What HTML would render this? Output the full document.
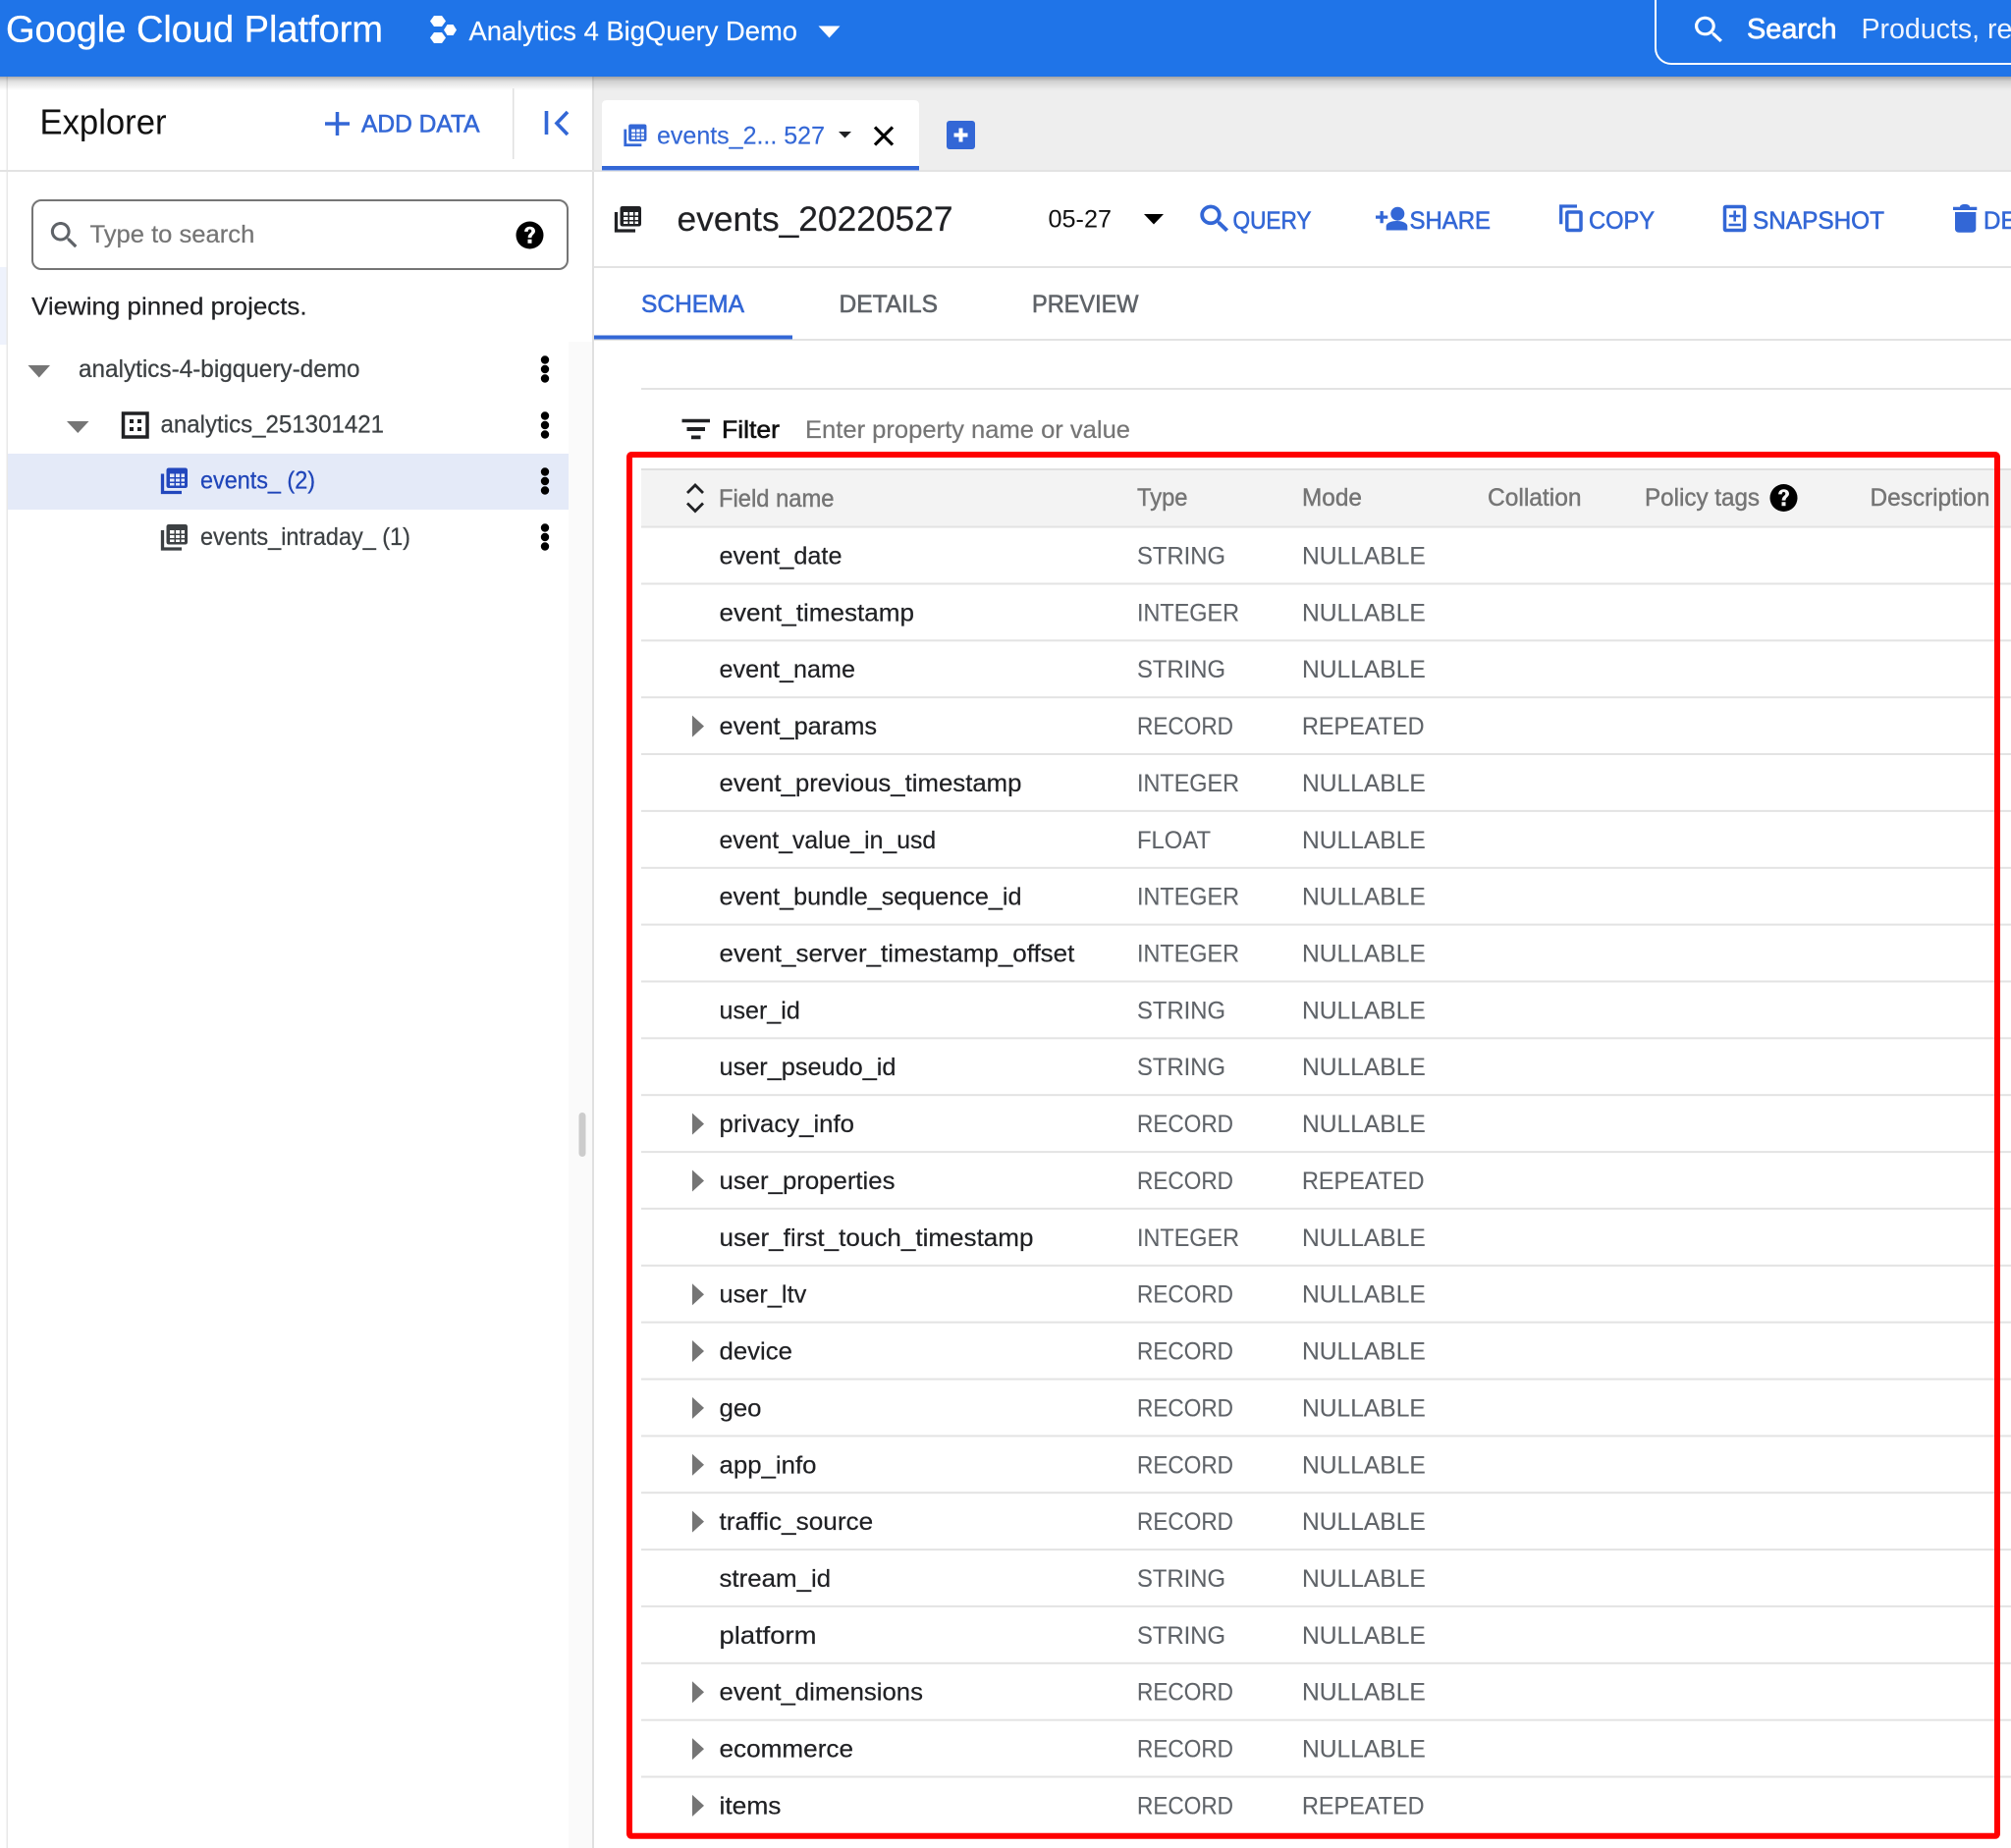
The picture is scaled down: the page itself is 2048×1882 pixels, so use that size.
<!DOCTYPE html>
<html lang="en"><head><meta charset="utf-8"><title>BigQuery Schema</title>
<style>
html,body{margin:0;padding:0;background:#fff;width:2048px;height:1882px;overflow:hidden}
svg{display:block}
text{font-family:"Liberation Sans",Arial,sans-serif;font-size:25px;white-space:pre}
.f{fill:#202124;stroke:#202124;stroke-width:.2px}
.g{fill:#5f6368;stroke:#5f6368;stroke-width:.1px}
.h{fill:#757575;stroke:#757575;stroke-width:.2px}
.hh{fill:#757575;stroke:#757575;stroke-width:.45px}
.b{fill:#3367d6;stroke:#3367d6;stroke-width:.15px}
.bm{fill:#3367d6;stroke:#3367d6;stroke-width:.6px}
.gm{fill:#5f6368;stroke:#5f6368;stroke-width:.6px}
.t{fill:#3c4043;stroke:#3c4043;stroke-width:.25px}
.w{fill:#fff;stroke:#fff;stroke-width:.2px}
</style></head><body>
<svg width="2048" height="1882" viewBox="0 0 2048 1882" xmlns="http://www.w3.org/2000/svg">
<defs>
<linearGradient id="sh" x1="0" y1="0" x2="0" y2="1"><stop offset="0" stop-color="#000" stop-opacity=".32"/><stop offset=".35" stop-color="#000" stop-opacity=".12"/><stop offset="1" stop-color="#000" stop-opacity="0"/></linearGradient>
<path id="t" d="M705-11 717 0 705 11z" fill="#757575"/>
<path id="sr" d="M15.5 14h-.79l-.28-.27C15.41 12.59 16 11.11 16 9.5 16 5.91 13.09 3 9.5 3S3 5.91 3 9.5 5.91 16 9.5 16c1.61 0 3.09-.59 4.23-1.57l.27.28v.79l5 4.99L20.49 19l-4.99-5zm-6 0C7.01 14 5 11.99 5 9.5S7.01 5 9.5 5 14 7.01 14 9.5 11.99 14 9.5 14z"/>
<g id="d"><circle cx="0" cy="-9.5" r="4.2"/><circle cx="0" cy="0" r="4.2"/><circle cx="0" cy="9.5" r="4.2"/></g>
<path id="q" fill-rule="evenodd" d="M0-14a14 14 0 1 0 0 28A14 14 0 1 0 0-14zM-5.4-3.6C-5.3-7-3-8.8.1-8.8 3.300-8.800 5.500-6.900 5.500-4.100 5.500-1.200 2-.5 1.900 2.600H-1.800C-1.900-1.700 1.800-2 1.800-4.200 1.800-5.300 1.100-6 0-6-1.100-6-1.800-5.100-1.800-3.600zM-2 4.300H2V8.200H-2z"/>
<g id="tb"><path d="M1.500 6V25H21" fill="none" stroke="currentColor" stroke-width="3.300"/><path fill-rule="evenodd" fill="currentColor" d="M5.500 2.500Q5.500 0 8 0H24.500Q27 0 27 2.500V18Q27 20.500 24.500 20.500H8Q5.500 20.500 5.500 18zM9 6V9.500H13.500V6zM15 6V9.500H19V6zM20.500 6V9.500H24V6zM9 11V14H13.500V11zM15 11V14H19V11zM20.500 11V14H24V11zM9 15.500V18H13.500V15.500zM15 15.500V18H19V15.500zM20.500 15.500V18H24V15.500z"/></g>
</defs>

<!-- backgrounds -->
<rect width="2048" height="1882" fill="#fff"/>
<rect x="605" y="78" width="1443" height="96" fill="#eeeeee"/>
<rect x="579" y="348" width="24" height="1534" fill="#fafafa"/>
<rect x="0" y="272" width="7" height="79" fill="#eef2fc"/>
<rect x="6.500" y="78" width="1.500" height="1804" fill="#e8e8e8"/>
<rect x="603" y="78" width="2" height="1804" fill="#e0e0e0"/>
<rect x="0" y="173" width="2048" height="2" fill="#e3e3e3"/>
<rect x="605" y="271" width="1443" height="2" fill="#e3e3e3"/>
<rect x="605" y="345" width="1443" height="2" fill="#e3e3e3"/>
<rect x="653" y="395" width="1395" height="2" fill="#e3e3e3"/>
<rect x="589.500" y="1133" width="7" height="45" rx="3.500" fill="#cccccc"/>

<!-- header -->
<rect x="0" y="78" width="2048" height="14" fill="url(#sh)"/>
<rect width="2048" height="78" fill="#1f74e8"/>
<text x="6" y="42.500" fill="#fff" stroke="#fff" stroke-width=".3" style="font-size:38px" textLength="384" lengthAdjust="spacingAndGlyphs">Google Cloud Platform</text>
<g fill="#fff">
<path d="M438 21.500 442 16H450L454 21.500 450 27H442z"/>
<path d="M452 30.500 455.500 25H461.500L465 30.500 461.500 36H455.500z"/>
<path d="M438 38.500 442 33H450L454 38.500 450 44H442z"/>
<path d="M833.500 26.500H855.500L844.500 38.500z"/>
</g>
<text x="477.500" y="41" class="w" style="font-size:28px" textLength="334.500" lengthAdjust="spacingAndGlyphs">Analytics 4 BigQuery Demo</text>
<rect x="1686" y="-20" width="420" height="85" rx="16" fill="none" stroke="#fff" stroke-width="2"/>
<use href="#sr" transform="translate(1721.200 12.300) scale(1.600 1.500)" fill="#fff"/>
<text x="1779" y="39" fill="#fff" stroke="#fff" stroke-width=".7" style="font-size:29px" textLength="91.500" lengthAdjust="spacingAndGlyphs">Search</text>
<text x="1895.500" y="39" fill="#f0f5fe" style="font-size:29px" textLength="330" lengthAdjust="spacingAndGlyphs">Products, resources, docs</text>

<!-- explorer -->
<text x="40.500" y="136.500" style="font-size:36px;fill:#111" textLength="129" lengthAdjust="spacingAndGlyphs">Explorer</text>
<path d="M331 126H356M343.500 114V138" stroke="#3367d6" stroke-width="3.500" fill="none"/>
<text x="368" y="134.500" class="bm" textLength="120.500" lengthAdjust="spacingAndGlyphs">ADD DATA</text>
<rect x="522" y="90" width="1.500" height="72" fill="#e0e0e0"/>
<path d="M556.500 113V137M578 114 567 125.500 578 137" stroke="#3367d6" stroke-width="3.600" fill="none"/>
<rect x="33" y="204" width="545" height="70" rx="9" fill="#fff" stroke="#757575" stroke-width="2"/>
<use href="#sr" transform="translate(47.300 221.500) scale(1.520 1.500)" fill="#5f6368"/>
<text x="91.500" y="247" class="h" textLength="167.800" lengthAdjust="spacingAndGlyphs">Type to search</text>
<use href="#q" x="539.500" y="239.500"/>
<text x="32" y="320.500" class="f" textLength="280.600" lengthAdjust="spacingAndGlyphs">Viewing pinned projects.</text>

<!-- tree -->
<rect x="8" y="462" width="571" height="57" fill="#e4eaf8"/>
<path d="M28.500 372H51L39.800 384.500z" fill="#757575"/>
<text x="80" y="384" class="t" textLength="286.500" lengthAdjust="spacingAndGlyphs">analytics-4-bigquery-demo</text>
<use href="#d" x="555" y="376"/>
<path d="M68 429H90.500L79.300 441z" fill="#757575"/>
<rect x="125.500" y="421" width="24.500" height="24" fill="none" stroke="#202124" stroke-width="3.500"/>
<g fill="#202124"><rect x="132" y="427" width="4" height="4"/><rect x="140" y="427" width="4" height="4"/><rect x="132" y="435" width="4" height="4"/><rect x="140" y="435" width="4" height="4"/></g>
<text x="163.500" y="440.500" class="t" textLength="227.500" lengthAdjust="spacingAndGlyphs">analytics_251301421</text>
<use href="#d" x="555" y="433"/>
<use href="#tb" x="164" y="476.500" color="#2247bd"/>
<text x="204" y="497.500" fill="#1f45b9" stroke="#1f45b9" stroke-width=".25" textLength="117" lengthAdjust="spacingAndGlyphs">events_ (2)</text>
<use href="#d" x="555" y="490"/>
<use href="#tb" x="164" y="534" color="#3c4043"/>
<text x="204" y="555" class="t" textLength="214" lengthAdjust="spacingAndGlyphs">events_intraday_ (1)</text>
<use href="#d" x="555" y="547"/>

<!-- tab strip -->
<path d="M613 174V107Q613 102 618 102H931Q936 102 936 107V174z" fill="#fff"/>
<rect x="613" y="169" width="323" height="4.500" fill="#3367d6"/>
<use href="#tb" transform="translate(635.500 126.500) scale(.85)" color="#3367d6"/>
<text x="669" y="146.500" class="b" textLength="171" lengthAdjust="spacingAndGlyphs">events_2... 527</text>
<path d="M854 134H867L860.500 140.500z" fill="#202124"/>
<path d="M891 129.500 909 147.500M909 129.500 891 147.500" stroke="#000" stroke-width="3.200" fill="none"/>
<rect x="964" y="123" width="29" height="29" rx="3" fill="#3367d6"/>
<path d="M971.500 137.500H985.500M978.500 130.500V144.500" stroke="#fff" stroke-width="4" fill="none"/>

<!-- toolbar -->
<use href="#tb" x="626" y="210" color="#202124"/>
<text x="689.500" y="235" class="f" style="font-size:35px" textLength="281" lengthAdjust="spacingAndGlyphs">events_20220527</text>
<text x="1067.500" y="231.500" fill="#111" textLength="64.500" lengthAdjust="spacingAndGlyphs">05-27</text>
<path d="M1165 218H1185L1175 228.500z" fill="#000"/>
<use href="#sr" transform="translate(1217.800 204.300) scale(1.600 1.530)" fill="#3367d6" stroke="#3367d6" stroke-width=".4"/>
<text x="1255.500" y="233" class="bm" textLength="80" lengthAdjust="spacingAndGlyphs">QUERY</text>
<g fill="#3367d6">
<circle cx="1423.300" cy="217.700" r="7"/>
<path d="M1411.700 234.500V230.500C1411.700 226.500 1418 225 1422.500 225S1433.300 226.500 1433.300 230.500V234.500z"/>
<path d="M1401 219.500H1405.500V215H1408.800V219.500H1413.300V222.800H1408.800V227.200H1405.500V222.800H1401z"/>
</g>
<text x="1435.500" y="233" class="bm" textLength="82.500" lengthAdjust="spacingAndGlyphs">SHARE</text>
<path d="M1606 210H1589.700V228.300" stroke="#3367d6" stroke-width="3.300" fill="none"/>
<rect x="1595.800" y="216" width="14.200" height="18.500" rx="1" fill="none" stroke="#3367d6" stroke-width="3.500"/>
<text x="1618" y="233" class="bm" textLength="67" lengthAdjust="spacingAndGlyphs">COPY</text>
<rect x="1756.500" y="210.500" width="20" height="24" rx="1" fill="none" stroke="#3367d6" stroke-width="3.500"/>
<path d="M1761 220H1772.500M1766.700 214.500V225.500M1760.500 229H1773" stroke="#3367d6" stroke-width="2.600" fill="none"/>
<text x="1785" y="233" class="bm" textLength="134" lengthAdjust="spacingAndGlyphs">SNAPSHOT</text>
<path d="M1996 210.700C1996 209 1998 208 2001 208S2006 209 2006 210.700H2013.300V214H1989V210.700zM1991 216H2012.300V233C2012.300 235.500 2010.500 236.700 2008.500 236.700H1995C1992.800 236.700 1991 235.500 1991 233z" fill="#3367d6"/>
<text x="2020" y="233" class="bm" textLength="175" lengthAdjust="spacingAndGlyphs">DELETE TABLE</text>

<!-- subtabs -->
<rect x="605" y="341.500" width="202" height="4" fill="#3367d6"/>
<text x="653" y="318" class="bm" textLength="105" lengthAdjust="spacingAndGlyphs">SCHEMA</text>
<text x="854.500" y="318" class="gm" textLength="100.500" lengthAdjust="spacingAndGlyphs">DETAILS</text>
<text x="1051" y="318" class="gm" textLength="108.500" lengthAdjust="spacingAndGlyphs">PREVIEW</text>

<!-- filter -->
<path d="M694.500 426.700H723V430.200H694.500zM699.500 435H718V439H699.500zM704 443.500H713.500V447.300H704z" fill="#202124"/>
<text x="735" y="446" fill="#111" stroke="#111" stroke-width=".6" textLength="59" lengthAdjust="spacingAndGlyphs">Filter</text>
<text x="820" y="446" class="h" textLength="331" lengthAdjust="spacingAndGlyphs">Enter property name or value</text>

<!-- table head -->
<rect x="653" y="478" width="1395" height="58" fill="#f3f3f3"/>
<rect x="653" y="477" width="1395" height="2" fill="#e0e0e0"/>
<path d="M700 502 708 494 716 502M700 512.500 708 520.500 716 512.500" stroke="#202124" stroke-width="2.800" fill="none"/>
<text x="732" y="516" class="hh" textLength="117.500" lengthAdjust="spacingAndGlyphs">Field name</text>
<text x="1158" y="515" class="hh" textLength="51.500" lengthAdjust="spacingAndGlyphs">Type</text>
<text x="1326" y="515" class="hh" textLength="61" lengthAdjust="spacingAndGlyphs">Mode</text>
<text x="1515" y="515" class="hh" textLength="95.500" lengthAdjust="spacingAndGlyphs">Collation</text>
<text x="1675" y="515" class="hh" textLength="117" lengthAdjust="spacingAndGlyphs">Policy tags</text>
<use href="#q" x="1816.500" y="507"/>
<text x="1904.500" y="515" class="hh" textLength="121.900" lengthAdjust="spacingAndGlyphs">Description</text>

<!-- row separators -->
<g fill="#e3e3e3">
<rect x="653" y="535.600" width="1395" height="2"/><rect x="653" y="593.500" width="1395" height="2"/><rect x="653" y="651.300" width="1395" height="2"/><rect x="653" y="709.200" width="1395" height="2"/><rect x="653" y="767" width="1395" height="2"/><rect x="653" y="824.900" width="1395" height="2"/><rect x="653" y="882.800" width="1395" height="2"/><rect x="653" y="940.600" width="1395" height="2"/><rect x="653" y="998.500" width="1395" height="2"/><rect x="653" y="1056.300" width="1395" height="2"/><rect x="653" y="1114.200" width="1395" height="2"/><rect x="653" y="1172.100" width="1395" height="2"/><rect x="653" y="1229.900" width="1395" height="2"/><rect x="653" y="1287.800" width="1395" height="2"/><rect x="653" y="1345.600" width="1395" height="2"/><rect x="653" y="1403.500" width="1395" height="2"/><rect x="653" y="1461.400" width="1395" height="2"/><rect x="653" y="1519.200" width="1395" height="2"/><rect x="653" y="1577.100" width="1395" height="2"/><rect x="653" y="1634.900" width="1395" height="2"/><rect x="653" y="1692.800" width="1395" height="2"/><rect x="653" y="1750.700" width="1395" height="2"/><rect x="653" y="1808.500" width="1395" height="2"/>
</g>

<!-- expand arrows -->
<use href="#t" y="739.600"/><use href="#t" y="1144.600"/><use href="#t" y="1202.500"/><use href="#t" y="1318.200"/><use href="#t" y="1376"/><use href="#t" y="1433.900"/><use href="#t" y="1491.800"/><use href="#t" y="1549.600"/><use href="#t" y="1723.200"/><use href="#t" y="1781.100"/><use href="#t" y="1838.900"/>

<!-- rows -->
<text x="732.500" y="574.500" class="f" textLength="125" lengthAdjust="spacingAndGlyphs">event_date</text><text x="1158" y="574.500" class="g" textLength="90" lengthAdjust="spacingAndGlyphs">STRING</text><text x="1326" y="574.500" class="g" textLength="125.800" lengthAdjust="spacingAndGlyphs">NULLABLE</text>
<text x="732.500" y="632.400" class="f" textLength="198.500" lengthAdjust="spacingAndGlyphs">event_timestamp</text><text x="1158" y="632.400" class="g" textLength="104" lengthAdjust="spacingAndGlyphs">INTEGER</text><text x="1326" y="632.400" class="g" textLength="125.800" lengthAdjust="spacingAndGlyphs">NULLABLE</text>
<text x="732.500" y="690.200" class="f" textLength="138.500" lengthAdjust="spacingAndGlyphs">event_name</text><text x="1158" y="690.200" class="g" textLength="90" lengthAdjust="spacingAndGlyphs">STRING</text><text x="1326" y="690.200" class="g" textLength="125.800" lengthAdjust="spacingAndGlyphs">NULLABLE</text>
<text x="732.500" y="748.100" class="f" textLength="160.600" lengthAdjust="spacingAndGlyphs">event_params</text><text x="1158" y="748.100" class="g" textLength="98" lengthAdjust="spacingAndGlyphs">RECORD</text><text x="1326" y="748.100" class="g" textLength="124.500" lengthAdjust="spacingAndGlyphs">REPEATED</text>
<text x="732.500" y="805.900" class="f" textLength="308" lengthAdjust="spacingAndGlyphs">event_previous_timestamp</text><text x="1158" y="805.900" class="g" textLength="104" lengthAdjust="spacingAndGlyphs">INTEGER</text><text x="1326" y="805.900" class="g" textLength="125.800" lengthAdjust="spacingAndGlyphs">NULLABLE</text>
<text x="732.500" y="863.800" class="f" textLength="220.700" lengthAdjust="spacingAndGlyphs">event_value_in_usd</text><text x="1158" y="863.800" class="g" textLength="75" lengthAdjust="spacingAndGlyphs">FLOAT</text><text x="1326" y="863.800" class="g" textLength="125.800" lengthAdjust="spacingAndGlyphs">NULLABLE</text>
<text x="732.500" y="921.700" class="f" textLength="308" lengthAdjust="spacingAndGlyphs">event_bundle_sequence_id</text><text x="1158" y="921.700" class="g" textLength="104" lengthAdjust="spacingAndGlyphs">INTEGER</text><text x="1326" y="921.700" class="g" textLength="125.800" lengthAdjust="spacingAndGlyphs">NULLABLE</text>
<text x="732.500" y="979.500" class="f" textLength="361.800" lengthAdjust="spacingAndGlyphs">event_server_timestamp_offset</text><text x="1158" y="979.500" class="g" textLength="104" lengthAdjust="spacingAndGlyphs">INTEGER</text><text x="1326" y="979.500" class="g" textLength="125.800" lengthAdjust="spacingAndGlyphs">NULLABLE</text>
<text x="732.500" y="1037.400" class="f" textLength="82.300" lengthAdjust="spacingAndGlyphs">user_id</text><text x="1158" y="1037.400" class="g" textLength="90" lengthAdjust="spacingAndGlyphs">STRING</text><text x="1326" y="1037.400" class="g" textLength="125.800" lengthAdjust="spacingAndGlyphs">NULLABLE</text>
<text x="732.500" y="1095.200" class="f" textLength="180" lengthAdjust="spacingAndGlyphs">user_pseudo_id</text><text x="1158" y="1095.200" class="g" textLength="90" lengthAdjust="spacingAndGlyphs">STRING</text><text x="1326" y="1095.200" class="g" textLength="125.800" lengthAdjust="spacingAndGlyphs">NULLABLE</text>
<text x="732.500" y="1153.100" class="f" textLength="137.500" lengthAdjust="spacingAndGlyphs">privacy_info</text><text x="1158" y="1153.100" class="g" textLength="98" lengthAdjust="spacingAndGlyphs">RECORD</text><text x="1326" y="1153.100" class="g" textLength="125.800" lengthAdjust="spacingAndGlyphs">NULLABLE</text>
<text x="732.500" y="1211" class="f" textLength="179" lengthAdjust="spacingAndGlyphs">user_properties</text><text x="1158" y="1211" class="g" textLength="98" lengthAdjust="spacingAndGlyphs">RECORD</text><text x="1326" y="1211" class="g" textLength="124.500" lengthAdjust="spacingAndGlyphs">REPEATED</text>
<text x="732.500" y="1268.800" class="f" textLength="320" lengthAdjust="spacingAndGlyphs">user_first_touch_timestamp</text><text x="1158" y="1268.800" class="g" textLength="104" lengthAdjust="spacingAndGlyphs">INTEGER</text><text x="1326" y="1268.800" class="g" textLength="125.800" lengthAdjust="spacingAndGlyphs">NULLABLE</text>
<text x="732.500" y="1326.700" class="f" textLength="88.800" lengthAdjust="spacingAndGlyphs">user_ltv</text><text x="1158" y="1326.700" class="g" textLength="98" lengthAdjust="spacingAndGlyphs">RECORD</text><text x="1326" y="1326.700" class="g" textLength="125.800" lengthAdjust="spacingAndGlyphs">NULLABLE</text>
<text x="732.500" y="1384.500" class="f" textLength="74.400" lengthAdjust="spacingAndGlyphs">device</text><text x="1158" y="1384.500" class="g" textLength="98" lengthAdjust="spacingAndGlyphs">RECORD</text><text x="1326" y="1384.500" class="g" textLength="125.800" lengthAdjust="spacingAndGlyphs">NULLABLE</text>
<text x="732.500" y="1442.400" class="f" textLength="43" lengthAdjust="spacingAndGlyphs">geo</text><text x="1158" y="1442.400" class="g" textLength="98" lengthAdjust="spacingAndGlyphs">RECORD</text><text x="1326" y="1442.400" class="g" textLength="125.800" lengthAdjust="spacingAndGlyphs">NULLABLE</text>
<text x="732.500" y="1500.300" class="f" textLength="99" lengthAdjust="spacingAndGlyphs">app_info</text><text x="1158" y="1500.300" class="g" textLength="98" lengthAdjust="spacingAndGlyphs">RECORD</text><text x="1326" y="1500.300" class="g" textLength="125.800" lengthAdjust="spacingAndGlyphs">NULLABLE</text>
<text x="732.500" y="1558.100" class="f" textLength="156.700" lengthAdjust="spacingAndGlyphs">traffic_source</text><text x="1158" y="1558.100" class="g" textLength="98" lengthAdjust="spacingAndGlyphs">RECORD</text><text x="1326" y="1558.100" class="g" textLength="125.800" lengthAdjust="spacingAndGlyphs">NULLABLE</text>
<text x="732.500" y="1616" class="f" textLength="113.600" lengthAdjust="spacingAndGlyphs">stream_id</text><text x="1158" y="1616" class="g" textLength="90" lengthAdjust="spacingAndGlyphs">STRING</text><text x="1326" y="1616" class="g" textLength="125.800" lengthAdjust="spacingAndGlyphs">NULLABLE</text>
<text x="732.500" y="1673.800" class="f" textLength="99" lengthAdjust="spacingAndGlyphs">platform</text><text x="1158" y="1673.800" class="g" textLength="90" lengthAdjust="spacingAndGlyphs">STRING</text><text x="1326" y="1673.800" class="g" textLength="125.800" lengthAdjust="spacingAndGlyphs">NULLABLE</text>
<text x="732.500" y="1731.700" class="f" textLength="207.500" lengthAdjust="spacingAndGlyphs">event_dimensions</text><text x="1158" y="1731.700" class="g" textLength="98" lengthAdjust="spacingAndGlyphs">RECORD</text><text x="1326" y="1731.700" class="g" textLength="125.800" lengthAdjust="spacingAndGlyphs">NULLABLE</text>
<text x="732.500" y="1789.600" class="f" textLength="136.500" lengthAdjust="spacingAndGlyphs">ecommerce</text><text x="1158" y="1789.600" class="g" textLength="98" lengthAdjust="spacingAndGlyphs">RECORD</text><text x="1326" y="1789.600" class="g" textLength="125.800" lengthAdjust="spacingAndGlyphs">NULLABLE</text>
<text x="732.500" y="1847.400" class="f" textLength="63" lengthAdjust="spacingAndGlyphs">items</text><text x="1158" y="1847.400" class="g" textLength="98" lengthAdjust="spacingAndGlyphs">RECORD</text><text x="1326" y="1847.400" class="g" textLength="124.500" lengthAdjust="spacingAndGlyphs">REPEATED</text>

<!-- red annotation -->
<rect x="641" y="463" width="1393" height="1406.800" rx="2" fill="none" stroke="#ff0000" stroke-width="6"/>
</svg>
</body></html>
